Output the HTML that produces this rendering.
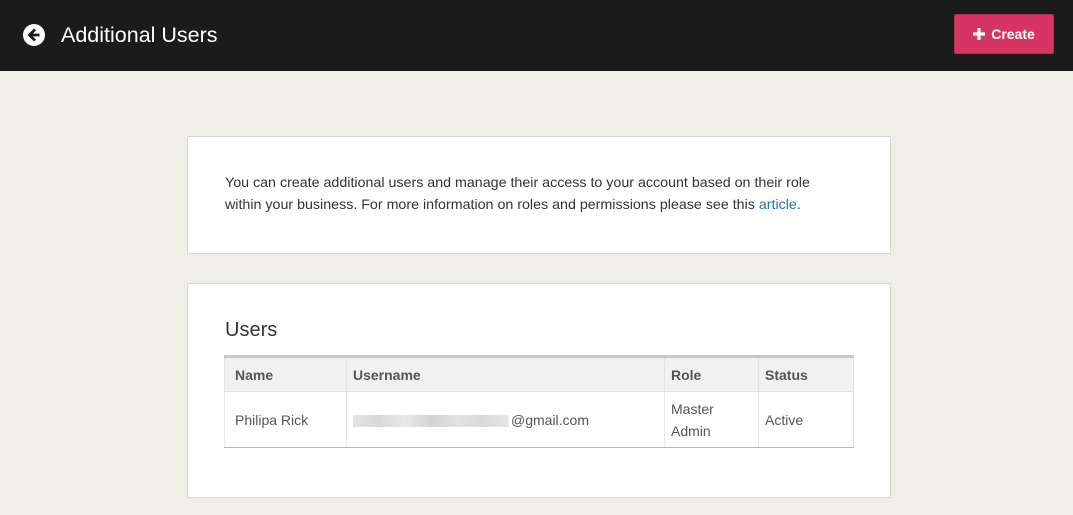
<!DOCTYPE html>
<html><head><meta charset="utf-8"><style>
*{margin:0;padding:0;box-sizing:border-box}
body{width:1073px;height:515px;background:#efeee7;font-family:"Liberation Sans",Arial,sans-serif;position:relative;overflow:hidden;color:#333}
.top{position:absolute;left:0;top:0;width:1073px;height:71px;background:#1b1b1b}
.title{position:absolute;left:61px;top:23px;color:#fff;font-size:21.5px}
.back{position:absolute;left:23px;top:24px}
.btn{position:absolute;left:954px;top:14px;width:100px;height:40px;background:#d63462;border:1px solid #b82a52;border-radius:2px;color:#fff;font-weight:bold;font-size:14px;line-height:38px;text-align:center}
.card{position:absolute;left:187px;width:704px;background:#fff;border:1px solid #d6d6d6;border-radius:2px}
.p{position:absolute;left:37px;top:35px;font-size:14.25px;line-height:22px;color:#333}
.p a{color:#2a6db0;text-decoration:none}
h2{position:absolute;left:37px;top:35px;font-size:20px;font-weight:normal;color:#333}
table{position:absolute;left:36px;top:71px;width:630px;border-collapse:collapse;font-size:14px;color:#555;border-top:3px solid #c8c8c8;border-bottom:1px solid #ec9abb}
th{background:#f1f1f1;text-align:left;font-weight:bold;height:35px;padding:0 6px;border:1px solid #e2e2e2;border-top:0}
td{height:56px;padding:0 6px;border-left:1px solid #e8e8e8;border-right:1px solid #e8e8e8;border-bottom:1px solid #ec9abb;line-height:22px}
th:first-child,td:first-child{padding-left:10px}
.blur{display:inline-block;width:156px;height:12px;background:linear-gradient(90deg,#e4e4e4,#d8d8d8,#e8e8e8,#d4d4d4,#e2e2e2,#dadada,#e6e6e6);vertical-align:middle;margin-right:2px}
</style></head><body>
<div class="top">
<svg class="back" width="22" height="22" viewBox="0 0 22 22"><circle cx="11" cy="11" r="11" fill="#fff"/><path d="M12 5.5 L6.5 11 L12 16.5 M7 11 H16.5" stroke="#1b1b1b" stroke-width="2.8" fill="none"/></svg>
<div class="title">Additional Users</div>
<div class="btn"><svg width="12" height="12" viewBox="0 0 12 12" style="vertical-align:-1px;margin-right:6px"><path d="M6 0V12M0 6H12" stroke="#fff" stroke-width="3.2"/></svg>Create</div>
</div>
<div class="card" style="top:136px;height:118px">
<div class="p">You can create additional users and manage their access to your account based on their role<br>within your business. For more information on roles and permissions please see this <a href="#">article</a>.</div>
</div>
<div class="card" style="top:283px;height:215px">
<h2>Users</h2>
<table>
<tr><th style="width:122px">Name</th><th style="width:318px">Username</th><th style="width:94px">Role</th><th>Status</th></tr>
<tr><td>Philipa Rick</td><td><span class="blur"></span>@gmail.com</td><td>Master<br>Admin</td><td>Active</td></tr>
</table>
</div>
</body></html>
